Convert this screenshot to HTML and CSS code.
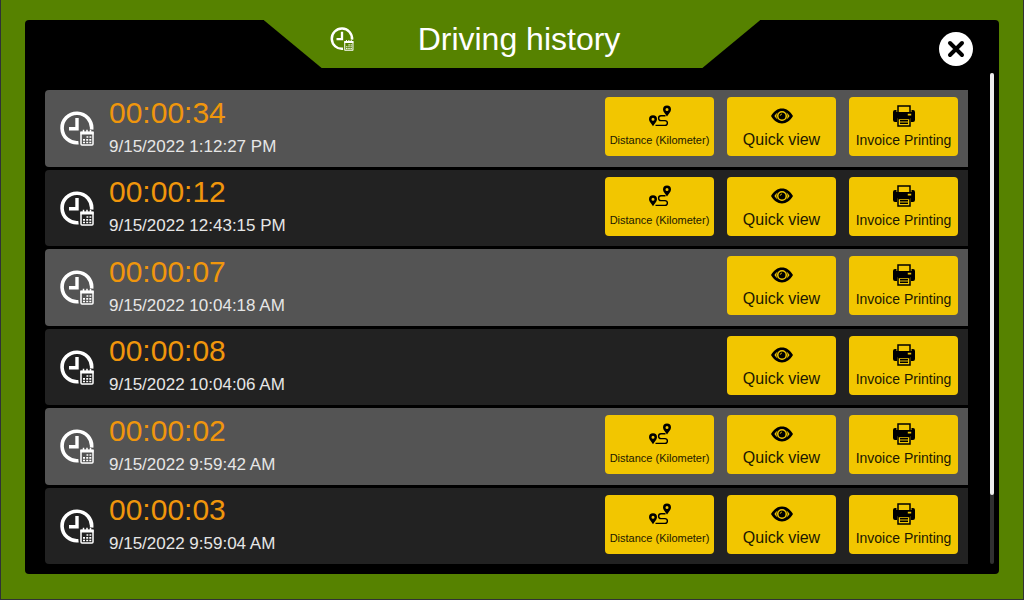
FILE: index.html
```html
<!DOCTYPE html>
<html lang="en">
<head>
<meta charset="utf-8">
<meta name="viewport" content="width=device-width, initial-scale=1">
<title>Driving history</title>
<link rel="stylesheet" href="styles.css">
</head>
<body>
<svg class="sprite" aria-hidden="true">
  <symbol id="clock" viewBox="0 0 34 35">
    <path d="M31.600 18.500A14.800 14.800 0 1 0 18.500 31.700" fill="none" stroke="currentColor" stroke-width="3.600"/>
    <path d="M17 7V17.800H9" fill="none" stroke="currentColor" stroke-width="3.400"/>
    <path d="M21 21.500h12v11.500a1 1 0 0 1-1 1H22a1 1 0 0 1-1-1z" fill="none" stroke="currentColor" stroke-width="1.500"/>
    <path d="M20.500 20.500h13v3h-13z" fill="currentColor"/>
    <path d="M23.500 18.800v3M27 18.800v3M30.500 18.800v3" stroke="currentColor" stroke-width="1.500"/>
    <path d="M26.500 26h1.800M29.500 26h1.800M23 28.800h2M26.200 28.800h2M29.300 28.800h2M23 31.500h2M26.200 31.500h2M29.300 31.500h2" stroke="currentColor" stroke-width="1.700"/>
  </symbol>
  <symbol id="route" viewBox="0 0 22 22">
    <path fill="currentColor" fill-rule="evenodd" d="M18 .5a4 4 0 0 1 4 4c0 2.300-2.300 4.300-4 7-1.700-2.700-4-4.700-4-7a4 4 0 0 1 4-4zm0 2.500a1.500 1.500 0 1 0 0 3 1.500 1.500 0 0 0 0-3z"/>
    <path fill="currentColor" fill-rule="evenodd" d="M4 10.300a4 4 0 0 1 4 4c0 2.300-2.300 4.300-4 6.900-1.700-2.600-4-4.600-4-6.900a4 4 0 0 1 4-4zm0 2.500a1.500 1.500 0 1 0 0 3 1.500 1.500 0 0 0 0-3z"/>
    <path d="M16.500 10.800H12a2.400 2.400 0 0 0 0 4.800h4a2.400 2.400 0 0 1 0 4.800H6.500" fill="none" stroke="currentColor" stroke-width="1.400"/>
  </symbol>
  <symbol id="eye" viewBox="0 0 22 16">
    <path fill="currentColor" fill-rule="evenodd" d="M0 8C3 3.200 6.500.6 11 .6S19 3.200 22 8c-3 4.800-6.500 7.400-11 7.400S3 12.800 0 8zm3.400 0c.9 1.500 2 2.700 3.300 3.500a6 6 0 0 1 0-7C5.400 5.300 4.300 6.500 3.400 8zm15.200 0c-.9-1.500-2-2.700-3.300-3.500a6 6 0 0 1 0 7c1.300-.8 2.400-2 3.300-3.500zM11 3a5 5 0 1 0 0 10 5 5 0 0 0 0-10z"/>
    <circle cx="11" cy="8" r="3.500" fill="currentColor"/>
    <path d="M9.200 7.800A1.900 1.900 0 0 1 11 6" fill="none" stroke="#f2c600" stroke-width=".8"/>
  </symbol>
  <symbol id="printer" viewBox="0 0 22 22">
    <path d="M5 7V1h12v6" fill="none" stroke="currentColor" stroke-width="1.500"/>
    <path fill="currentColor" d="M2 5h1.500v2h15V5H20a2 2 0 0 1 2 2v8a2 2 0 0 1-2 2H2a2 2 0 0 1-2-2V7a2 2 0 0 1 2-2z"/>
    <path d="M14.800 8.800h3.400v1.700h-3.400zM4 13.300h14V17H4z" fill="#f2c600"/>
    <path d="M5 13.500h12V21H5z" fill="#f2c600" stroke="currentColor" stroke-width="1.500"/>
    <path d="M7 15.800h8M7 18.300h8" stroke="currentColor" stroke-width="1.400"/>
  </symbol>
</svg>

<main class="panel">
  <header class="header">
    <div class="tab">
      <svg class="tab-icon" aria-hidden="true"><use href="#clock"/></svg>
      <h1 class="title">Driving history</h1>
    </div>
    <button class="close" type="button" aria-label="Close">
      <svg class="close-icon" viewBox="0 0 18 18" aria-hidden="true"><path d="M3 3l12 12M15 3l-12 12"/></svg>
    </button>
  </header>
  <div class="content">
    <ul class="list">
      <li class="row">
        <svg class="row-icon" aria-hidden="true"><use href="#clock"/></svg>
        <div class="info"><span class="duration">00:00:34</span><time class="date">9/15/2022 1:12:27 PM</time></div>
        <div class="actions">
          <button class="action small" type="button"><svg class="icon" aria-hidden="true"><use href="#route"/></svg><span class="label">Distance (Kilometer)</span></button>
          <button class="action" type="button"><svg class="icon" aria-hidden="true"><use href="#eye"/></svg><span class="label">Quick view</span></button>
          <button class="action medium" type="button"><svg class="icon" aria-hidden="true"><use href="#printer"/></svg><span class="label">Invoice Printing</span></button>
        </div>
      </li>
      <li class="row">
        <svg class="row-icon" aria-hidden="true"><use href="#clock"/></svg>
        <div class="info"><span class="duration">00:00:12</span><time class="date">9/15/2022 12:43:15 PM</time></div>
        <div class="actions">
          <button class="action small" type="button"><svg class="icon" aria-hidden="true"><use href="#route"/></svg><span class="label">Distance (Kilometer)</span></button>
          <button class="action" type="button"><svg class="icon" aria-hidden="true"><use href="#eye"/></svg><span class="label">Quick view</span></button>
          <button class="action medium" type="button"><svg class="icon" aria-hidden="true"><use href="#printer"/></svg><span class="label">Invoice Printing</span></button>
        </div>
      </li>
      <li class="row">
        <svg class="row-icon" aria-hidden="true"><use href="#clock"/></svg>
        <div class="info"><span class="duration">00:00:07</span><time class="date">9/15/2022 10:04:18 AM</time></div>
        <div class="actions">
          <button class="action" type="button"><svg class="icon" aria-hidden="true"><use href="#eye"/></svg><span class="label">Quick view</span></button>
          <button class="action medium" type="button"><svg class="icon" aria-hidden="true"><use href="#printer"/></svg><span class="label">Invoice Printing</span></button>
        </div>
      </li>
      <li class="row">
        <svg class="row-icon" aria-hidden="true"><use href="#clock"/></svg>
        <div class="info"><span class="duration">00:00:08</span><time class="date">9/15/2022 10:04:06 AM</time></div>
        <div class="actions">
          <button class="action" type="button"><svg class="icon" aria-hidden="true"><use href="#eye"/></svg><span class="label">Quick view</span></button>
          <button class="action medium" type="button"><svg class="icon" aria-hidden="true"><use href="#printer"/></svg><span class="label">Invoice Printing</span></button>
        </div>
      </li>
      <li class="row">
        <svg class="row-icon" aria-hidden="true"><use href="#clock"/></svg>
        <div class="info"><span class="duration">00:00:02</span><time class="date">9/15/2022 9:59:42 AM</time></div>
        <div class="actions">
          <button class="action small" type="button"><svg class="icon" aria-hidden="true"><use href="#route"/></svg><span class="label">Distance (Kilometer)</span></button>
          <button class="action" type="button"><svg class="icon" aria-hidden="true"><use href="#eye"/></svg><span class="label">Quick view</span></button>
          <button class="action medium" type="button"><svg class="icon" aria-hidden="true"><use href="#printer"/></svg><span class="label">Invoice Printing</span></button>
        </div>
      </li>
      <li class="row">
        <svg class="row-icon" aria-hidden="true"><use href="#clock"/></svg>
        <div class="info"><span class="duration">00:00:03</span><time class="date">9/15/2022 9:59:04 AM</time></div>
        <div class="actions">
          <button class="action small" type="button"><svg class="icon" aria-hidden="true"><use href="#route"/></svg><span class="label">Distance (Kilometer)</span></button>
          <button class="action" type="button"><svg class="icon" aria-hidden="true"><use href="#eye"/></svg><span class="label">Quick view</span></button>
          <button class="action medium" type="button"><svg class="icon" aria-hidden="true"><use href="#printer"/></svg><span class="label">Invoice Printing</span></button>
        </div>
      </li>
    </ul>
    <div class="track"><div class="thumb"></div></div>
  </div>
</main>
</body>
</html>
```
FILE: styles.css
```css
* {
  box-sizing: border-box;
}

body {
  display: flex;
  min-height: 100vh;
  margin: 0;
  padding: 20px 24px 25px;
  border: solid #303236;
  border-width: 0 1px 1px;
  background: #568200;
  font-family: "Liberation Sans", Arial, sans-serif;
}

.sprite {
  position: absolute;
  width: 0;
  height: 0;
}

.panel {
  display: flex;
  flex: 1;
  flex-direction: column;
  border-radius: 4px;
  background: #000;
}

.header {
  position: relative;
  display: flex;
  justify-content: center;
}

.tab {
  display: grid;
  grid-template-columns: 1fr auto 1fr;
  align-items: center;
  width: 51%;
  height: 48px;
  padding-bottom: 11px;
  background: #568200;
  clip-path: polygon(0 0, 100% 0, calc(100% - 58px) 100%, 58px 100%);
}

.tab-icon {
  width: 24px;
  height: 24px;
  margin-left: 66px;
  color: #fff;
}

.title {
  margin: 0;
  padding-left: 14px;
  color: #fff;
  font-size: 32px;
  font-weight: 400;
  line-height: 36px;
}

.close {
  position: absolute;
  top: 12px;
  right: 26px;
  display: grid;
  place-items: center;
  width: 34px;
  height: 34px;
  padding: 0;
  border: 0;
  border-radius: 50%;
  background: #fff;
}

.close-icon {
  width: 18px;
  height: 18px;
  fill: none;
  stroke: #000;
  stroke-width: 4;
  stroke-linecap: round;
}

.content {
  display: flex;
  flex: 1;
  gap: 22px;
  padding: 5px 5px 10px 20px;
}

.list {
  display: grid;
  flex: 1;
  grid-auto-rows: 1fr;
  gap: 3px;
  margin: 17px 0 0;
  padding: 0;
  list-style: none;
}

.row {
  display: flex;
  align-items: center;
  padding: 4px 10px 7px 15px;
  border-radius: 4px 0 0 4px;
  background: #222;
}

.row:nth-child(odd) {
  background: #545454;
}

.row-icon {
  width: 34px;
  height: 35px;
  margin-top: 4px;
  color: #fff;
}

.info {
  display: flex;
  flex: 1;
  flex-direction: column;
  gap: 8px;
  margin-left: 15px;
}

.duration {
  color: #f0960c;
  font-size: 30px;
  line-height: 32px;
}

.date {
  color: #e6e6e6;
  font-size: 17px;
  line-height: 20px;
}

.actions {
  display: flex;
  gap: 13px;
}

.action {
  display: flex;
  flex-direction: column;
  align-items: center;
  gap: 2px;
  width: 109px;
  height: 59px;
  padding: 8px 0 0;
  border: 0;
  border-radius: 4px;
  background: #f2c600;
  color: #1c1800;
  font-family: inherit;
  font-size: 16px;
  line-height: 22px;
  white-space: nowrap;
}

.medium {
  font-size: 14px;
}

.small {
  font-size: 11px;
}

.icon {
  width: 22px;
  height: 22px;
  color: #000;
}

.track {
  width: 4px;
  border-radius: 2px;
  background: #303030;
}

.thumb {
  height: 86%;
  border-radius: 2px;
  background: #eee;
}
```
